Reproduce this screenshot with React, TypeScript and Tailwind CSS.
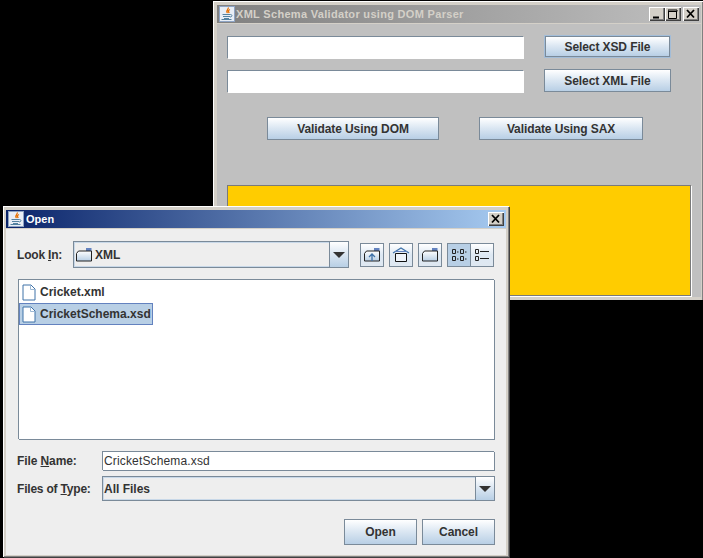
import React from 'react';

const font = "[font-family:'Liberation_Sans',Arial,sans-serif]";
const metalBtn =
    'flex items-center justify-center border border-[#7a8a99] bg-[linear-gradient(#ffffff,#dde8f3_45%,#b8cfe5)] text-[12px] font-bold tracking-[-0.1px] text-[#333333]';
const capBtn =
    'flex h-[14px] w-[16px] items-center justify-center bg-[#d4d0c8] shadow-[inset_1px_1px_0_#ffffff,inset_-1px_-1px_0_#404040,inset_-2px_-2px_0_#808080]';

function JavaIcon() {
    return (
        <svg width="16" height="16" viewBox="0 0 16 16" className="shrink-0">
            <rect x="0.5" y="0.5" width="15" height="15" fill="#e8eef6" stroke="#8ea4c4" />
            <path d="M9 1.5c1.5 1.5-3 3-.5 5.5M11 3.5c-2.5 1-1.5 2.2-.8 3.5" fill="none" stroke="#e76f00" strokeWidth="1.3" />
            <path d="M3.5 8.5h8M4 10.5h7M5 12.5h5" fill="none" stroke="#5382a1" />
            <path d="M11.5 8.5c2 0 2 2.5-.5 2.5M2.5 13.5h10" fill="none" stroke="#5382a1" />
        </svg>
    );
}

function WindowButtons({ caps }: { caps: Array<'min' | 'max' | 'close'> }) {
    return (
        <div className="flex">
            {caps.map((cap) => (
                <div key={cap} className={`${capBtn} ${cap === 'close' ? 'ml-[2px]' : ''}`}>
                    <svg width="10" height="10" viewBox="0 0 10 10">
                        {cap === 'min' && <path d="M1 7.5h6v2H1z" fill="#000" />}
                        {cap === 'max' && <path d="M.5 2.5h8v7h-8zM0 1h9v1.5H0z" fill="none" stroke="#000" />}
                        {cap === 'close' && <path d="M1 1l7 7.5M8 1L1 8.5" stroke="#000" strokeWidth="1.8" fill="none" />}
                    </svg>
                </div>
            ))}
        </div>
    );
}

function TextField({ className }: { className: string }) {
    return <div className={`border-t border-l border-[#7a8a99] bg-white shadow-[1px_1px_0_#ffffff] ${className}`} />;
}

function FolderIcon({ children }: { children?: React.ReactNode }) {
    return (
        <svg width="16" height="14" viewBox="0 0 16 14">
            <defs>
                <linearGradient id="folderFill" x1="0" y1="0" x2="0" y2="1">
                    <stop offset="0" stopColor="#ffffff" />
                    <stop offset="1" stopColor="#b8cfe5" />
                </linearGradient>
            </defs>
            <path d="M10 0h5.5v3H10z" fill="#6382bf" />
            <path d="M.5 5.5l2-2.5h13v10H.5z" fill="url(#folderFill)" stroke="#222" />
            {children}
        </svg>
    );
}

function FileIcon() {
    return (
        <svg width="14" height="17" viewBox="0 0 14 17" className="shrink-0">
            <path d="M1 1h8l4 4v11H1z" fill="#ffffff" stroke="#3f72a8" />
            <path d="M8.5 1v4.5H13" fill="none" stroke="#9db8d4" />
        </svg>
    );
}

function ToolBtn({ active, children, className }: { active?: boolean; children: React.ReactNode; className?: string }) {
    return (
        <div
            className={`flex h-[24px] w-[24px] items-center justify-center border border-[#7a8a99] ${
                active ? 'bg-[#b8cfe5]' : 'bg-[linear-gradient(#ffffff,#dde8f3_50%,#dfe8f1)]'
            } ${className ?? ''}`}
        >
            {children}
        </div>
    );
}

function ComboArrow({ className }: { className: string }) {
    return (
        <div className={`flex items-center justify-center border-l border-[#7a8a99] bg-[linear-gradient(#ffffff,#dde8f3_45%,#b8cfe5)] ${className}`}>
            <div className="h-0 w-0 border-x-[6px] border-t-[6px] border-x-transparent border-t-[#333333]" />
        </div>
    );
}

function ValidatorWindow() {
    return (
        <section className="absolute left-[213px] top-[1px] flex h-[299px] w-[490px] flex-col border-t border-l border-white bg-[#d4d0c8] pb-[3px] pl-[3px] pr-[2px] pt-[3px] shadow-[inset_-1px_0_0_#808080]">
            <header className="flex h-[18px] shrink-0 items-center justify-between bg-[linear-gradient(90deg,#808080,#c0c0c0)] pl-[2px] pr-[2px]">
                <div className="flex items-center gap-[1px]">
                    <JavaIcon />
                    <span className="text-[11px] font-bold tracking-[0.31px] text-[#d4d0c8]">XML Schema Validator using DOM Parser</span>
                </div>
                <WindowButtons caps={['min', 'max', 'close']} />
            </header>
            <div className="mt-[1px] flex flex-1 flex-col bg-[#c0c0c0] pl-[10px] pt-[12px]">
                <div className="flex items-start">
                    <TextField className="h-[22px] w-[296px]" />
                    <button className={`ml-[22px] h-[21px] w-[125px] outline outline-1 outline-[#a3bdd8] ${metalBtn}`}>Select XSD File</button>
                </div>
                <div className="mt-[11px] flex items-center">
                    <TextField className="h-[22px] w-[296px]" />
                    <button className={`ml-[21px] h-[23px] w-[127px] ${metalBtn}`}>Select XML File</button>
                </div>
                <div className="mt-[25px] flex pl-[40px]">
                    <button className={`h-[23px] w-[172px] ${metalBtn}`}>Validate Using DOM</button>
                    <button className={`ml-[40px] h-[23px] w-[164px] ${metalBtn}`}>Validate Using SAX</button>
                </div>
                <div className="mt-[45px] h-[111px] w-[464px] border border-[#7a7a7a] bg-[#ffcc00] shadow-[1px_1px_0_#ffffff]" />
            </div>
        </section>
    );
}

function OpenDialog() {
    return (
        <section className="absolute left-[3px] top-[206px] flex h-[351px] w-[506px] flex-col border-t border-l border-white bg-[#d4d0c8] pb-[2px] pl-[2px] pr-[3px] pt-[3px] shadow-[1px_1px_0_#404040,inset_-1px_-1px_0_#808080]">
            <header className="flex h-[18px] shrink-0 items-center justify-between bg-[linear-gradient(90deg,#0a246a,#a6caf0)] pl-[2px] pr-[2px]">
                <div className="flex items-center gap-[2px]">
                    <JavaIcon />
                    <span className="text-[11px] font-bold text-white">Open</span>
                </div>
                <WindowButtons caps={['close']} />
            </header>
            <div className="mt-[1px] flex flex-1 flex-col bg-[#eeeeee] pl-[11px] pr-[11px] text-[12px] font-bold text-[#333333]">
                <div className="mt-[12px] flex items-center">
                    <span className="w-[56px] tracking-[-0.2px]">
                        Look <span className="underline">I</span>n:
                    </span>
                    <div className="flex h-[27px] w-[276px] border border-[#7a8a99] bg-[#eeeeee] shadow-[inset_0_0_0_1px_#c8d8e8]">
                        <div className="flex flex-1 items-center gap-[3px] pl-[2px]">
                            <FolderIcon />
                            <span>XML</span>
                        </div>
                        <ComboArrow className="w-[19px]" />
                    </div>
                    <ToolBtn className="ml-[11px]">
                        <FolderIcon>
                            <path d="M8 13V6.5M5 9l3-3 3 3" fill="none" stroke="#3f72a8" strokeWidth="1.3" />
                        </FolderIcon>
                    </ToolBtn>
                    <ToolBtn className="ml-[5px]">
                        <svg width="18" height="16" viewBox="0 0 18 16">
                            <path d="M1 6l8-5 8 5" fill="none" stroke="#3f72a8" strokeWidth="1.3" />
                            <path d="M3 4.5h12" stroke="#6382bf" />
                            <path d="M3.5 6.5h11v8h-11z" fill="#eef3f9" stroke="#111" />
                        </svg>
                    </ToolBtn>
                    <ToolBtn className="ml-[5px]">
                        <FolderIcon />
                    </ToolBtn>
                    <ToolBtn className="ml-[5px]" active>
                        <svg width="16" height="14" viewBox="0 0 16 14" fill="none" stroke="#222">
                            <path d="M1.5 1.5h3v4h-3zM9.5 1.5h3v4h-3zM1.5 8.5h3v4h-3zM9.5 8.5h3v4h-3z" />
                            <path d="M6 4h1.5M14 4h1.5M6 11h1.5M14 11h1.5" />
                        </svg>
                    </ToolBtn>
                    <ToolBtn className="-ml-px">
                        <svg width="16" height="14" viewBox="0 0 16 14" fill="none" stroke="#222">
                            <path d="M1.5 1.5h3v4h-3zM1.5 8.5h3v4h-3z" />
                            <path d="M6 3.5h9M6 10.5h9" />
                        </svg>
                    </ToolBtn>
                </div>
                <div className="ml-[1px] mt-[11px] flex h-[160px] w-[476px] flex-col border-t border-l border-[#7a8a99] bg-white pt-[1px] shadow-[1px_1px_0_#7a8a99]">
                    <div className="flex h-[22px] w-[134px] items-center gap-[4px] pl-[3px]">
                        <FileIcon />
                        <span>Cricket.xml</span>
                    </div>
                    <div className="flex h-[22px] w-[134px] items-center gap-[4px] whitespace-nowrap border border-[#6382bf] bg-[#b8cfe5] pl-[2px]">
                        <FileIcon />
                        <span>CricketSchema.xsd</span>
                    </div>
                </div>
                <div className="mt-[12px] flex items-center">
                    <span className="w-[85px] tracking-[-0.1px]">
                        File <span className="underline">N</span>ame:
                    </span>
                    <div className="flex h-[19px] w-[392px] items-center border-t border-l border-[#7a8a99] bg-white pl-[1px] text-[12px] font-normal tracking-[0.15px] shadow-[1px_1px_0_#7a8a99]">
                        CricketSchema.xsd
                    </div>
                </div>
                <div className="mt-[6px] flex items-center">
                    <span className="w-[85px] tracking-[-0.2px]">
                        Files of <span className="underline">T</span>ype:
                    </span>
                    <div className="flex h-[25px] w-[393px] border border-[#7a8a99] bg-[#eeeeee] shadow-[inset_0_0_0_1px_#c8d8e8]">
                        <div className="flex flex-1 items-center pl-[1px]">All Files</div>
                        <ComboArrow className="w-[19px]" />
                    </div>
                </div>
                <div className="mt-[18px] flex justify-end gap-[5px]">
                    <button className={`h-[26px] w-[73px] ${metalBtn}`}>Open</button>
                    <button className={`h-[26px] w-[73px] ${metalBtn}`}>Cancel</button>
                </div>
            </div>
        </section>
    );
}

export default function App() {
    return (
        <div className={`relative h-[558px] w-[703px] overflow-hidden bg-black ${font}`}>
            <ValidatorWindow />
            <OpenDialog />
        </div>
    );
}
